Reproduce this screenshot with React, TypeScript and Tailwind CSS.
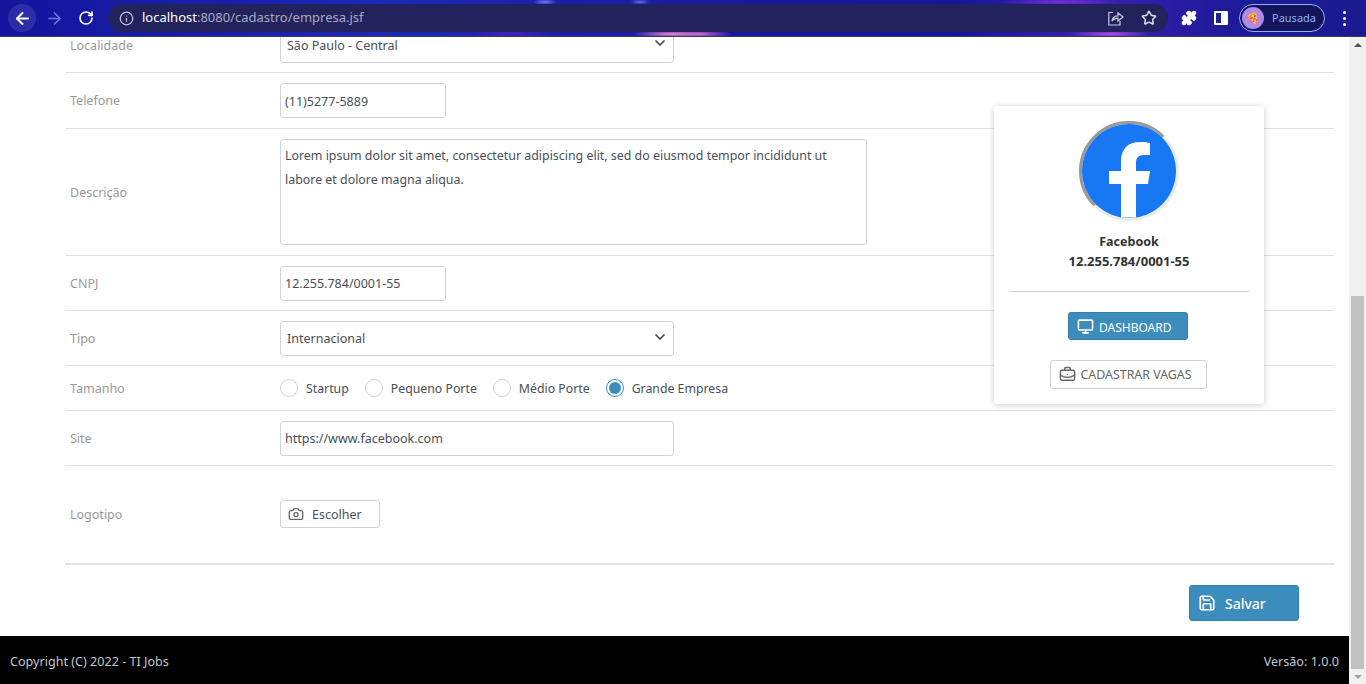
import { ChevronDown, Monitor, BriefcaseBusiness, Camera, Save, ArrowLeft, ArrowRight, RotateCw, Info, Star, Puzzle } from "lucide-react";

const font = "font-['Noto_Sans',sans-serif]";
const control = "h-[35px] rounded-[3px] border border-[#ced4da] bg-white pt-[2px] text-[12.5px] text-[#495057] flex items-center";

function Row({ label, className = "", children }: { label: string; className?: string; children: React.ReactNode }) {
  return (
    <div className={`flex items-center border-b border-[#dee2e6] pl-[5px] ${className}`}>
      <div className="w-[210px] shrink-0 pt-[2px] text-[12.5px] text-[#999]">{label}</div>
      {children}
    </div>
  );
}

function Radio({ label, checked = false }: { label: string; checked?: boolean }) {
  return (
    <div className="flex items-center gap-[8px]">
      <span className={`flex size-[18px] items-center justify-center rounded-full border ${checked ? "border-[#3c8dbc]" : "border-[#ced4da]"}`}>
        {checked && <span className="size-[12px] rounded-full bg-[#3c8dbc]" />}
      </span>
      <span className="pt-[2px] text-[12.3px] text-[#495057]">{label}</span>
    </div>
  );
}

function Toolbar() {
  return (
    <div className="flex h-[37px] shrink-0 items-center border-b border-[#3a3a50] bg-[radial-gradient(ellipse_40px_4px_at_672px_34px,#f08ad0,transparent),radial-gradient(ellipse_30px_4px_at_702px_34px,#c060d0,transparent),radial-gradient(ellipse_40px_5px_at_510px_34px,#4a20c0,transparent),radial-gradient(ellipse_12px_3px_at_545px_2px,#6a80f0,transparent),radial-gradient(ellipse_10px_3px_at_640px_2px,#5a70e0,transparent),radial-gradient(ellipse_40px_4px_at_1110px_34px,#b050f0,transparent),radial-gradient(ellipse_60px_4px_at_1060px_2px,#7a30d8,transparent),linear-gradient(90deg,#14149c_0%,#1c28b8_28%,#1a1aa0_50%,#16169a_70%,#3a20b0_80%,#1e1a9a_90%,#1a1a90_100%)] pl-[8px] pr-[20px] text-white">
      <div className="flex size-[28px] items-center justify-center rounded-full bg-white/10">
        <ArrowLeft size={19} strokeWidth={2.5} />
      </div>
      <ArrowRight size={19} strokeWidth={2} className="ml-[9px] text-[#6f74d8]" />
      <RotateCw size={16} strokeWidth={2.5} className="ml-[14px]" />
      <div className="ml-[14px] flex h-[28px] w-[1060px] items-center rounded-full bg-[#22225c] pl-[11px] pr-[11px]">
        <Info size={15} className="text-[#c8c8d8]" />
        <span className="ml-[8px] text-[13px] text-[#a9a9c4]">
          <span className="text-white">localhost</span>:8080/cadastro/empresa.jsf
        </span>
        <svg width="16" height="15" viewBox="0 0 16 15" fill="none" stroke="#c8c8d8" strokeWidth="1.2" className="ml-auto">
          <path d="M5 1.5H.8V14H12V10" />
          <path d="M4 10C4.5 6.5 7 4.8 10 4.8V1.8L15 6L10 10V7.2C8 7.2 5.5 8 4 10Z" />
        </svg>
        <Star size={16} className="ml-[17px] text-[#e0e0e8]" strokeWidth={2.2} />
      </div>
      <Puzzle size={16} fill="white" className="ml-[13px]" />
      <div className="ml-[17px] flex size-[14px] items-center rounded-[1px] bg-white pr-[7px] pl-[2px]">
        <span className="h-[10px] w-full bg-[#22208c]" />
      </div>
      <div className="ml-[11px] flex h-[28px] w-[86px] items-center rounded-full border border-[#8ab4f8] bg-[#14145c] pl-[2px]">
        <span className="flex size-[22px] items-center justify-center rounded-full bg-[#b088e8] text-[11px]">🍕</span>
        <span className="ml-[8px] text-[11px] text-[#8ab4f8]">Pausada</span>
      </div>
      <div className="ml-auto flex flex-col gap-[3px]">
        <span className="size-[3px] rounded-full bg-white" />
        <span className="size-[3px] rounded-full bg-white" />
        <span className="size-[3px] rounded-full bg-white" />
      </div>
    </div>
  );
}

function Card() {
  return (
    <div className="absolute left-[994px] top-[69px] flex h-[298px] w-[270px] flex-col items-center rounded-[3px] bg-white px-[15px] pt-[15px] shadow-[0_1px_6px_rgba(0,0,0,0.2)]">
      <svg width="100" height="100" viewBox="0 0 100 100">
        <circle cx="50" cy="50" r="48.5" fill="none" stroke="#ececec" strokeWidth="3" />
        <path d="M 15.7 84.3 A 48.5 48.5 0 0 1 84.3 15.7" fill="none" stroke="#999" strokeWidth="3" />
        <circle cx="50" cy="50" r="47" fill="#1877f2" />
        <path d="M42 96.5 V63 H30 V50 H42 V40 C42 28 49 21 61 21 C65 21 69 21.5 71 22 V34 H65 C59 34 57 37 57 42 V50 H71 L69 63 H57 V96.5 Z" fill="#fff" />
      </svg>
      <div className="mt-[11px] text-[12.5px] leading-[20px] font-bold text-[#333]">Facebook</div>
      <div className="-mt-px text-[13px] leading-[20px] font-bold text-[#333]">12.255.784/0001-55</div>
      <div className="mt-[20px] w-full border-t border-[#ced4da]" />
      <div className="mt-[20px] mr-[2px] flex h-[28px] w-[120px] items-center gap-[5px] rounded-[3px] border border-[#367fa9] bg-[#3c8dbc] pl-[8px] text-[12px] text-white">
        <Monitor size={17} strokeWidth={2.2} />
        <span className="pt-[3px]">DASHBOARD</span>
      </div>
      <div className="mt-[20px] mr-[2px] flex h-[29px] w-[157px] items-center gap-[5px] rounded-[3px] border border-[#ced4da] pl-[8px] text-[12.4px] text-[#666]">
        <BriefcaseBusiness size={17} />
        <span className="pt-[2px]">CADASTRAR VAGAS</span>
      </div>
    </div>
  );
}

function Scrollbar() {
  return (
    <div className="flex w-[17px] shrink-0 flex-col items-center bg-[#f1f1f1]">
      <div className="mt-[6px] size-0 border-x-[4px] border-b-[4px] border-x-transparent border-b-[#505050]" />
      <div className="mt-[249px] h-[373px] w-[13px] bg-[#c1c1c1]" />
      <div className="mt-[6px] size-0 border-x-[4px] border-t-[4px] border-x-transparent border-t-[#a3a3a3]" />
    </div>
  );
}

export default function App() {
  return (
    <div className={`flex h-[684px] w-[1366px] flex-col overflow-hidden bg-white ${font}`}>
      <Toolbar />
      <div className="flex min-h-0 flex-1">
        <div className="flex min-w-0 flex-1 flex-col">
          <div className="relative flex-1 overflow-hidden">
            <div className="ml-[65px] mr-[15px] -mt-[10px]">
              <Row label="Localidade" className="h-[46px] pb-[10px] pt-[1px]">
                <div className={`${control} w-[394px] justify-between pl-[6px] pr-[5px]`}>
                  São Paulo - Central
                  <ChevronDown size={16} strokeWidth={2.5} className="-mt-[6px] text-[#444]" />
                </div>
              </Row>
              <Row label="Telefone" className="h-[56px]">
                <div className={`${control} w-[166px] pl-[4px] pt-[3px]`}>(11)5277-5889</div>
              </Row>
              <Row label="Descrição" className="h-[127px]">
                <div className="h-[106px] w-[587px] rounded-[3px] border border-[#ced4da] px-[4px] py-[4px] text-[12.4px] leading-[24px] text-[#495057]">
                  Lorem ipsum dolor sit amet, consectetur adipiscing elit, sed do eiusmod tempor incididunt ut labore et dolore magna aliqua.
                </div>
              </Row>
              <Row label="CNPJ" className="h-[55px]">
                <div className={`${control} w-[166px] pl-[4px]`}>12.255.784/0001-55</div>
              </Row>
              <Row label="Tipo" className="h-[55px]">
                <div className={`${control} w-[394px] justify-between pl-[6px] pr-[5px]`}>
                  Internacional
                  <ChevronDown size={16} strokeWidth={2.5} className="-mt-[5px] text-[#444]" />
                </div>
              </Row>
              <Row label="Tamanho" className="h-[45px]">
                <div className="flex items-center gap-[16px]">
                  <Radio label="Startup" />
                  <Radio label="Pequeno Porte" />
                  <Radio label="Médio Porte" />
                  <Radio label="Grande Empresa" checked />
                </div>
              </Row>
              <Row label="Site" className="h-[55px]">
                <div className={`${control} w-[394px] pl-[4px]`}>https://www.facebook.com</div>
              </Row>
              <Row label="Logotipo" className="h-[99px] border-b-2">
                <div className="-mt-[2px] flex h-[28px] w-[100px] items-center gap-[8px] rounded-[3px] border border-[#ced4da] pl-[7px] text-[12.5px] text-[#495057]">
                  <Camera size={16} className="text-[#666]" />
                  <span className="pt-[3px]">Escolher</span>
                </div>
              </Row>
              <div className="flex justify-end pr-[35px] pt-[20px]">
                <div className="flex h-[36px] w-[110px] items-center gap-[9px] rounded-[3px] border border-[#367fa9] bg-[#3c8dbc] pl-[8px] text-[14px] font-medium text-white">
                  <Save size={18} strokeWidth={2.2} />
                  Salvar
                </div>
              </div>
            </div>
            <Card />
          </div>
          <div className="flex h-[48px] shrink-0 items-center justify-between bg-black px-[10px] pt-[4px] text-[12.6px] text-[#c2c7ce]">
            <span>Copyright (C) 2022 - TI Jobs</span>
            <span>Versão: 1.0.0</span>
          </div>
        </div>
        <Scrollbar />
      </div>
    </div>
  );
}
